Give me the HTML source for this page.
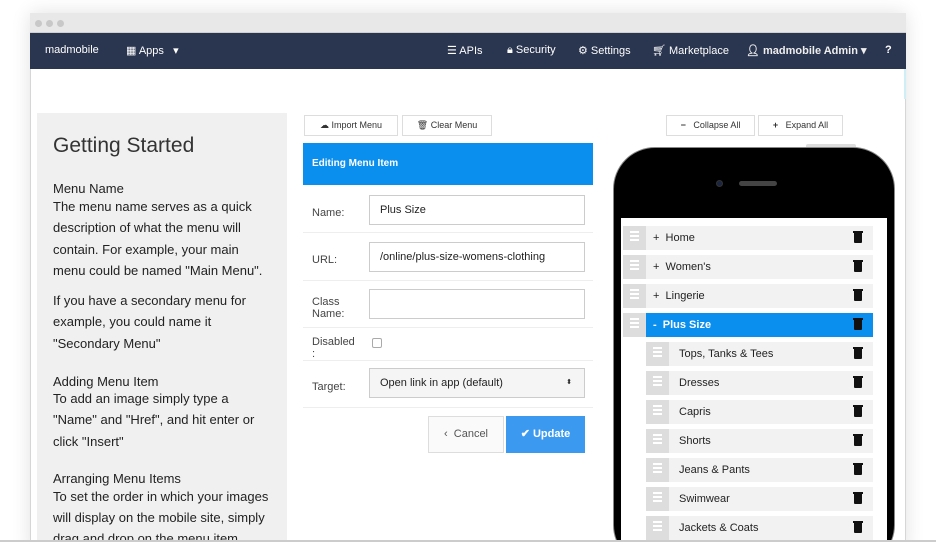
<!DOCTYPE html>
<html><head><meta charset="utf-8"><style>
*{box-sizing:border-box;margin:0;padding:0}
html,body{width:936px;height:542px;overflow:hidden}
body{background:#fff;font-family:"Liberation Sans",sans-serif;color:#222}
#w{position:relative;width:936px;height:542px;overflow:hidden}
.a{position:absolute}
.win{left:30px;top:13px;width:876px;height:540px;background:#fff;border:1px solid #d6d6d6;box-shadow:0 0 18px rgba(0,0,0,.12)}
.tb{left:30px;top:13px;width:876px;height:20px;background:#e8e8e8;border-bottom:1px solid #d0d0d0}
.dot{width:7px;height:7px;border-radius:50%;background:#c8c8c8;top:20px}
.nav{left:30px;top:33px;width:876px;height:36px;background:#2a354f;color:#fff;font-size:11px}
.nav span{position:absolute;top:11px;white-space:nowrap}
.lp{left:37px;top:113px;width:250px;height:430px;background:#f0f0f0}
.lt{left:53px;font-size:13px;color:#222;white-space:nowrap}
.btn{height:21px;border:1px solid #ddd;background:#fff;font-size:9px;color:#333;top:115px;text-align:center;line-height:19px}
.row{left:303px;width:290px;border-bottom:1px solid #eee}
.lbl{font-size:11px;color:#444;left:312px}
.inp{left:369px;width:216px;height:30px;border:1px solid #ccc;background:#fff;font-size:11px;padding-left:10px;line-height:28px;color:#222}
.it{height:24px;background:#f2f2f2;font-size:11px;color:#222;line-height:24px}
.hd{position:absolute;left:0;top:0;width:23px;height:24px;background:#ddd}
.hd i{position:absolute;left:7px;width:9px;height:2px;background:#fff}
.tr{position:absolute;right:11px;top:7px;width:8px;height:10px;background:#111;border-radius:0 0 1px 1px}
.tr:before{content:"";position:absolute;left:-1px;top:-2px;width:10px;height:2px;background:#111}
</style></head><body><div id="w">
<div class="a win"></div>
<div class="a tb"></div>
<div class="a dot" style="left:35px"></div><div class="a dot" style="left:46px"></div><div class="a dot" style="left:57px"></div>
<div class="a nav">
<span style="left:15px">madmobile</span>
<span style="left:96px">▦ Apps &nbsp; ▾</span>
<span style="left:417px">☰ APIs</span>
<span style="left:477px">🔒︎ Security</span>
<span style="left:548px">⚙ Settings</span>
<span style="left:622px">🛒︎ Marketplace</span>
<span style="left:716px;font-weight:bold;color:#eee">👤︎ madmobile Admin ▾</span>
<span style="left:855px;font-weight:bold">?</span>
</div>
<div class="a" style="left:904px;top:69px;width:2px;height:30px;background:#cfeef5"></div>

<div class="a lp"></div>
<div class="a lt" style="top:134px;font-size:21px;color:#333">Getting Started</div>
<div class="a lt" style="top:181px">Menu Name</div>
<div class="a lt" style="top:199px">The menu name serves as a quick</div>
<div class="a lt" style="top:220px">description of what the menu will</div>
<div class="a lt" style="top:242px">contain. For example, your main</div>
<div class="a lt" style="top:263px">menu could be named "Main Menu".</div>
<div class="a lt" style="top:293px">If you have a secondary menu for</div>
<div class="a lt" style="top:314px">example, you could name it</div>
<div class="a lt" style="top:336px">"Secondary Menu"</div>
<div class="a lt" style="top:374px">Adding Menu Item</div>
<div class="a lt" style="top:391px">To add an image simply type a</div>
<div class="a lt" style="top:412px">"Name" and "Href", and hit enter or</div>
<div class="a lt" style="top:434px">click "Insert"</div>
<div class="a lt" style="top:471px">Arranging Menu Items</div>
<div class="a lt" style="top:489px">To set the order in which your images</div>
<div class="a lt" style="top:510px">will display on the mobile site, simply</div>
<div class="a lt" style="top:531px">drag and drop on the menu item</div>

<div class="a btn" style="left:304px;width:94px">☁ Import Menu</div>
<div class="a btn" style="left:402px;width:90px">🗑︎ Clear Menu</div>
<div class="a btn" style="left:666px;width:89px"><b>−</b>&nbsp;&nbsp; Collapse All</div>
<div class="a btn" style="left:758px;width:85px"><b>+</b>&nbsp;&nbsp; Expand All</div>

<div class="a" style="left:303px;top:143px;width:290px;height:42px;background:#0a8fee;color:#fff;font-size:10px;font-weight:bold;padding:15px 0 0 9px">Editing Menu Item</div>
<div class="a row" style="top:185px;height:48px"></div>
<div class="a row" style="top:233px;height:48px"></div>
<div class="a row" style="top:281px;height:47px"></div>
<div class="a row" style="top:328px;height:33px"></div>
<div class="a row" style="top:361px;height:47px"></div>
<div class="a lbl" style="top:207px">Name:</div>
<div class="a inp" style="top:195px">Plus Size</div>
<div class="a lbl" style="top:254px">URL:</div>
<div class="a inp" style="top:242px">/online/plus-size-womens-clothing</div>
<div class="a lbl" style="top:296px;line-height:12px">Class<br>Name:</div>
<div class="a inp" style="top:289px"></div>
<div class="a lbl" style="top:336px;line-height:12px">Disabled<br>:</div>
<div class="a" style="left:372px;top:338px;width:10px;height:10px;border:1px solid #aaa;border-radius:2px"></div>
<div class="a lbl" style="top:381px">Target:</div>
<div class="a inp" style="top:368px;background:#f5f5f5">Open link in app (default)<span style="position:absolute;right:12px;font-size:7px">⬍</span></div>
<div class="a" style="left:428px;top:416px;width:76px;height:37px;border:1px solid #ddd;background:#fafafa;font-size:11px;color:#555;text-align:center;line-height:35px">‹ &nbsp;Cancel</div>
<div class="a" style="left:506px;top:416px;width:79px;height:37px;background:#3b9af0;font-size:11px;color:#fff;font-weight:bold;text-align:center;line-height:37px">✔ Update</div>

<div class="a" style="left:806px;top:144px;width:50px;height:5px;background:#ddd;border-radius:2px"></div>
<div class="a" style="left:613px;top:147px;width:282px;height:420px;background:#000;border-radius:42px;border:1px solid #888"></div>
<div class="a" style="left:716px;top:180px;width:7px;height:7px;border-radius:50%;background:#1a2540;border:1px solid #333"></div>
<div class="a" style="left:739px;top:181px;width:38px;height:5px;border-radius:3px;background:#444"></div>
<div class="a" style="left:621px;top:218px;width:266px;height:330px;background:#fff"></div>

<div class="a it" style="left:623px;top:226px;width:250px"><div class="hd"><i style="top:5px"></i><i style="top:9px"></i><i style="top:13px"></i></div><span style="margin-left:30px">+ &nbsp;Home</span><div class="tr"></div></div>
<div class="a it" style="left:623px;top:255px;width:250px"><div class="hd"><i style="top:5px"></i><i style="top:9px"></i><i style="top:13px"></i></div><span style="margin-left:30px">+ &nbsp;Women's</span><div class="tr"></div></div>
<div class="a it" style="left:623px;top:284px;width:250px"><div class="hd"><i style="top:5px"></i><i style="top:9px"></i><i style="top:13px"></i></div><span style="margin-left:30px">+ &nbsp;Lingerie</span><div class="tr"></div></div>
<div class="a it" style="left:623px;top:313px;width:250px;background:#0a8fee;color:#fff;font-weight:bold"><div class="hd"><i style="top:5px"></i><i style="top:9px"></i><i style="top:13px"></i></div><span style="margin-left:30px">- &nbsp;Plus Size</span><div class="tr"></div></div>

<div class="a it" style="left:646px;top:342px;width:227px"><div class="hd"><i style="top:5px"></i><i style="top:9px"></i><i style="top:13px"></i></div><span style="margin-left:33px">Tops, Tanks &amp; Tees</span><div class="tr"></div></div>
<div class="a it" style="left:646px;top:371px;width:227px"><div class="hd"><i style="top:5px"></i><i style="top:9px"></i><i style="top:13px"></i></div><span style="margin-left:33px">Dresses</span><div class="tr"></div></div>
<div class="a it" style="left:646px;top:400px;width:227px"><div class="hd"><i style="top:5px"></i><i style="top:9px"></i><i style="top:13px"></i></div><span style="margin-left:33px">Capris</span><div class="tr"></div></div>
<div class="a it" style="left:646px;top:429px;width:227px"><div class="hd"><i style="top:5px"></i><i style="top:9px"></i><i style="top:13px"></i></div><span style="margin-left:33px">Shorts</span><div class="tr"></div></div>
<div class="a it" style="left:646px;top:458px;width:227px"><div class="hd"><i style="top:5px"></i><i style="top:9px"></i><i style="top:13px"></i></div><span style="margin-left:33px">Jeans &amp; Pants</span><div class="tr"></div></div>
<div class="a it" style="left:646px;top:487px;width:227px"><div class="hd"><i style="top:5px"></i><i style="top:9px"></i><i style="top:13px"></i></div><span style="margin-left:33px">Swimwear</span><div class="tr"></div></div>
<div class="a it" style="left:646px;top:516px;width:227px"><div class="hd"><i style="top:5px"></i><i style="top:9px"></i><i style="top:13px"></i></div><span style="margin-left:33px">Jackets &amp; Coats</span><div class="tr"></div></div>
<div class="a" style="left:0;top:540px;width:936px;height:2px;background:#ccc"></div>
</div></body></html>
